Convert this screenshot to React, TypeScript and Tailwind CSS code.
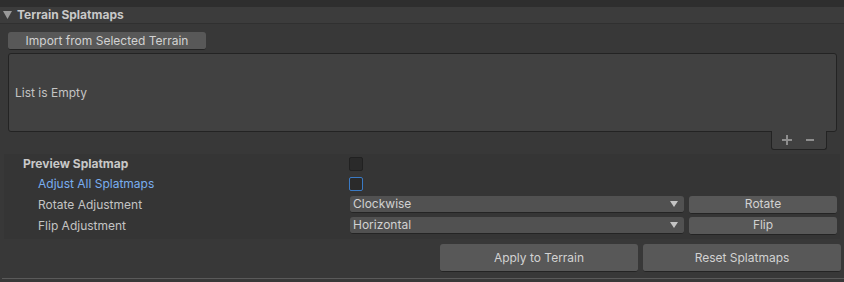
import { useState } from "react";

const font = { fontFamily: "Inter, 'Noto Sans', sans-serif" };

function Caret() {
  return (
    <svg width="8" height="6" viewBox="0 0 8 6" className="shrink-0">
      <path d="M0 0 L8 0 L4 6 Z" fill="#c4c4c4" />
    </svg>
  );
}

function Checkbox({ focused }: { focused?: boolean }) {
  return (
    <div
      className={
        focused
          ? "w-[14px] h-[14px] rounded-[2px] bg-[#2a2a2a] border border-[#3a7ac4]"
          : "w-[14px] h-[14px] rounded-[2px] bg-[#2a2a2a] border border-[#212121]"
      }
    />
  );
}

function Dropdown({ value }: { value: string }) {
  return (
    <div className="flex-1 h-[17px] rounded-[3px] bg-[#515151] border-b border-[#242424] flex items-center justify-between pl-[3px] pr-[6px] text-[12px] text-[#d2d2d2]">
      <span>{value}</span>
      <Caret />
    </div>
  );
}

function SmallButton({ children }: { children: React.ReactNode }) {
  return (
    <button className="block w-[148px] h-[18px] rounded-[3px] bg-[#585858] border-b border-[#242424] text-[12px] text-[#d2d2d2] leading-none">
      {children}
    </button>
  );
}

export default function App() {
  const [open] = useState(true);
  return (
    <div className="w-[844px] h-[282px] bg-[#383838] overflow-hidden text-[#c4c4c4]" style={font}>
      <div className="h-[7px] bg-[#2e2e2e]" />
      <div className="h-[17px] bg-[#3c3c3c] flex items-center gap-[5px] pl-[3px] border-b border-[#303030]">
        <svg width="9" height="8" viewBox="0 0 9 8" className={open ? "" : "-rotate-90"}>
          <path d="M0 0 L9 0 L4.5 8 Z" fill="#9a9a9a" />
        </svg>
        <span className="text-[12px] font-bold text-[#c8c8c8]">Terrain Splatmaps</span>
      </div>

      <div className="pl-[8px] pr-[7px] pt-[8px]">
        <button className="block w-[198px] h-[18px] rounded-[3px] bg-[#585858] border-b border-[#242424] text-[12px] text-[#d2d2d2] leading-none">
          Import from Selected Terrain
        </button>

        <div className="mt-[3px] h-[79px] rounded-[3px] bg-[#414141] border border-[#232323] flex items-center pl-[6px] text-[12px] text-[#c4c4c4]">
          List is Empty
        </div>
        <div className="flex justify-end pr-[10px]">
          <div className="w-[56px] h-[19px] -mt-px rounded-b-[3px] bg-[#414141] border border-t-0 border-[#232323] flex items-center pl-[10px] gap-[14px]">
            <svg width="10" height="10" viewBox="0 0 10 10">
              <path d="M0 5 H10 M5 0 V10" stroke="#8e8e8e" strokeWidth="2" />
            </svg>
            <svg width="8" height="10" viewBox="0 0 8 10">
              <path d="M0 5 H8" stroke="#8e8e8e" strokeWidth="2" />
            </svg>
          </div>
        </div>
      </div>

      <div className="mx-[4px] mt-[4px] pb-[3px] bg-[#353535] flex flex-col">
        <div className="flex items-center h-[20px]">
          <span className="w-[345px] pl-[19px] text-[12px] font-bold text-[#c8c8c8]">Preview Splatmap</span>
          <Checkbox />
        </div>
        <div className="flex items-center h-[20px]">
          <span className="w-[345px] pl-[34px] text-[12px] text-[#79aef0]">Adjust All Splatmaps</span>
          <Checkbox focused />
        </div>
        <div className="flex items-center h-[21px] gap-[5px] pr-[3px]">
          <span className="w-[341px] pl-[34px] text-[12px]">Rotate Adjustment</span>
          <Dropdown value="Clockwise" />
          <SmallButton>Rotate</SmallButton>
        </div>
        <div className="flex items-center h-[21px] gap-[5px] pr-[3px]">
          <span className="w-[341px] pl-[34px] text-[12px]">Flip Adjustment</span>
          <Dropdown value="Horizontal" />
          <SmallButton>Flip</SmallButton>
        </div>
      </div>

      <div className="flex justify-end gap-[5px] pr-[3px] mt-[5px]">
        <button className="block w-[198px] h-[28px] rounded-[3px] bg-[#585858] border-b border-[#242424] text-[12px] text-[#d2d2d2]">
          Apply to Terrain
        </button>
        <button className="block w-[198px] h-[28px] rounded-[3px] bg-[#585858] border-b border-[#242424] text-[12px] text-[#d2d2d2]">
          Reset Splatmaps
        </button>
      </div>
      <div className="mt-[6px] ml-[2px] h-px bg-[#5a5a5a]" />
    </div>
  );
}
